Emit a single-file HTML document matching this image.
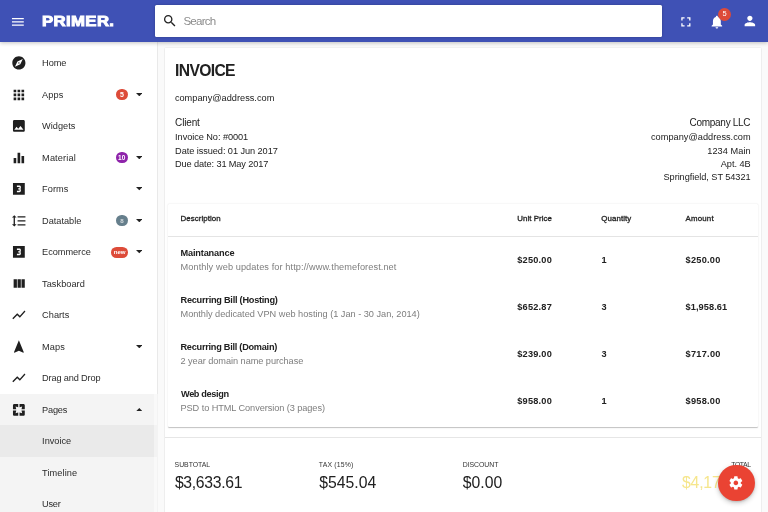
<!DOCTYPE html>
<html><head><meta charset="utf-8"><title>Invoice</title>
<style>
*{box-sizing:border-box;margin:0;padding:0}
html,body{width:768px;height:512px;overflow:hidden}
body{font-family:"Liberation Sans",sans-serif;background:#fafafa;color:#212121;position:relative}
.x{position:absolute;white-space:nowrap;z-index:3}
.bg{position:absolute;z-index:1}
.top{position:absolute;left:0;top:0;width:768px;height:41.700px;background:#3f51b5;box-shadow:0 1px 4px rgba(0,0,0,.24);z-index:2}
.top svg{position:absolute;width:15.75px;height:15.75px}
.logo{position:absolute;left:41.900px;top:9.800px;font-weight:bold;font-size:14.600px;color:#fff;letter-spacing:.3px;line-height:22px;-webkit-text-stroke:.9px #fff;z-index:3;transform-origin:0 50%;transform:scaleX(1.150)}
.search{position:absolute;left:155px;top:5px;width:506.800px;height:31.600px;background:#fff;border-radius:1.500px;box-shadow:0 0 2.500px rgba(0,0,0,.28);z-index:2}
.side{position:absolute;left:0;top:0;width:158px;height:512px;background:#fff;border-right:1px solid #e9e9e9;z-index:1}
svg.ic{position:absolute;width:15.75px;height:15.75px;z-index:3}
svg.ar{position:absolute;z-index:3}
.bd{position:absolute;border-radius:6px;color:#fff;text-align:center;font-weight:bold;z-index:3}
.card{position:absolute;left:165.100px;top:48.300px;width:596.400px;height:480px;background:#fff;box-shadow:0 0 1.500px rgba(0,0,0,.14),0 .5px 1.500px rgba(0,0,0,.08);z-index:1}
.tbl{position:absolute;left:167.700px;top:203.700px;width:590px;height:223.300px;background:#fff;border-radius:1px;box-shadow:0 1.200px .6px -.6px rgba(0,0,0,.13),0 .7px .7px rgba(0,0,0,.1),0 .7px 2px rgba(0,0,0,.1);z-index:1}
.hl{position:absolute;left:167.700px;top:235.700px;width:590px;height:1px;background:#e4e4e4;z-index:2}
.sep{position:absolute;left:165px;top:437px;width:596.400px;height:1px;background:#e6e6e6;z-index:2}
.fab{position:absolute;left:718.200px;top:464.700px;width:36.600px;height:36.600px;border-radius:50%;background:#ea4333;box-shadow:0 2px 5px rgba(0,0,0,.22),0 1px 2px rgba(0,0,0,.12);z-index:9}
.fab svg{position:absolute;left:9.900px;top:10.500px;width:15.75px;height:15.75px}
.nb{position:absolute;left:718.100px;top:8.200px;width:13.200px;height:12.800px;border-radius:6.600px;background:#dd4b39;color:#fff;font-size:7.500px;line-height:12.800px;text-align:center;z-index:4}
#w{position:absolute;left:0;top:0;width:768px;height:512px;will-change:transform;transform:translateZ(0)}
</style></head><body><div id="w">
<div class="side"></div>
<div class="bg" style="left:0;top:393.750px;width:157px;height:119px;background:#f4f4f4"></div>
<div class="bg" style="left:0;top:425.300px;width:157px;height:31.500px;background:#eaeaea"></div>
<div class="bg" style="left:153.700px;top:393.750px;width:3.900px;height:119px;background:rgba(255,255,255,.45)"></div>
<svg class="ic" style="left:10.500px;top:55.02px" viewBox="0 0 24 24" fill="#1f1f1f"><path d="M12 10.900c-.61 0-1.100.49-1.100 1.100s.49 1.100 1.100 1.100c.61 0 1.100-.49 1.100-1.100s-.49-1.100-1.100-1.100zM12 2C6.480 2 2 6.480 2 12s4.480 10 10 10 10-4.480 10-10S17.520 2 12 2zm2.190 12.190L6 18l3.810-8.190L18 6l-3.810 8.190z"/></svg>
<svg class="ic" style="left:10.500px;top:86.53px" viewBox="0 0 24 24" fill="#1f1f1f"><path d="M4 8h4V4H4v4zm6 12h4v-4h-4v4zm-6 0h4v-4H4v4zm0-6h4v-4H4v4zm6 0h4v-4h-4v4zm6-10v4h4V4h-4zm-6 4h4V4h-4v4zm6 6h4v-4h-4v4zm0 6h4v-4h-4v4z"/></svg>
<div class="bd" style="left:115.9px;top:88.80px;width:12.2px;height:11.4px;line-height:11.4px;font-size:7px;background:#dd4b39">5</div>
<svg class="ar" style="left:135.800px;top:92.90px" width="6.600" height="3.300" viewBox="0 0 6.600 3.300"><path fill="#222" d="M0 0h6.600L3.300 3.300z"/></svg>
<svg class="ic" style="left:10.500px;top:118.03px" viewBox="0 0 24 24" fill="#1f1f1f"><path d="M21 19V5c0-1.100-.9-2-2-2H5c-1.100 0-2 .9-2 2v14c0 1.100.9 2 2 2h14c1.100 0 2-.9 2-2zM8.500 13.500l2.500 3.010L14.500 12l4.500 6H5l3.500-4.500z"/></svg>
<svg class="ic" style="left:10.500px;top:149.53px" viewBox="0 0 24 24" fill="#1f1f1f"><path d="M10 20h4V4h-4v16zm-6 0h4v-8H4v8zM16 9v11h4V9h-4z"/></svg>
<div class="bd" style="left:115.5px;top:151.80px;width:12.3px;height:11.4px;line-height:11.4px;font-size:6.5px;background:#8e24aa">10</div>
<svg class="ar" style="left:135.800px;top:155.90px" width="6.600" height="3.300" viewBox="0 0 6.600 3.300"><path fill="#222" d="M0 0h6.600L3.300 3.300z"/></svg>
<svg class="ic" style="left:10.500px;top:181.03px" viewBox="0 0 24 24" fill="#1f1f1f"><path d="M21 3H3v18h18V3zm-6 7.500c0 .83-.67 1.500-1.500 1.500.83 0 1.500.67 1.500 1.500V15c0 1.110-.9 2-2 2H9v-2h4v-2h-2v-2h2V9H9V7h4c1.100 0 2 .89 2 2v1.500z"/></svg>
<svg class="ar" style="left:135.800px;top:187.40px" width="6.600" height="3.300" viewBox="0 0 6.600 3.300"><path fill="#222" d="M0 0h6.600L3.300 3.300z"/></svg>
<svg class="ic" style="left:10.500px;top:212.53px" viewBox="0 0 24 24" fill="#1f1f1f"><path d="M6 7h2.500L5 3.500 1.500 7H4v10H1.500L5 20.500 8.500 17H6V7zm4-2v2h12V5H10zm0 14h12v-2H10v2zm0-6h12v-2H10v2z"/></svg>
<div class="bd" style="left:116.1px;top:214.80px;width:11.9px;height:11.4px;line-height:11.4px;font-size:6.2px;background:#667f8c;color:rgba(255,255,255,.72)">8</div>
<svg class="ar" style="left:135.800px;top:218.90px" width="6.600" height="3.300" viewBox="0 0 6.600 3.300"><path fill="#222" d="M0 0h6.600L3.300 3.300z"/></svg>
<svg class="ic" style="left:10.500px;top:244.03px" viewBox="0 0 24 24" fill="#1f1f1f"><path d="M21 3H3v18h18V3zm-6 7.500c0 .83-.67 1.500-1.500 1.500.83 0 1.500.67 1.500 1.500V15c0 1.110-.9 2-2 2H9v-2h4v-2h-2v-2h2V9H9V7h4c1.100 0 2 .89 2 2v1.500z"/></svg>
<div class="bd" style="left:111px;top:247.30px;width:17.3px;height:10.4px;line-height:10.4px;font-size:6.1px;background:#dd4b39">new</div>
<svg class="ar" style="left:135.800px;top:250.40px" width="6.600" height="3.300" viewBox="0 0 6.600 3.300"><path fill="#222" d="M0 0h6.600L3.300 3.300z"/></svg>
<svg class="ic" style="left:10.500px;top:275.52px" viewBox="0 0 24 24" fill="#1f1f1f"><path d="M10 18h5V5h-5v13zm-6 0h5V5H4v13zM16 5v13h5V5h-5z"/></svg>
<svg class="ic" style="left:10.500px;top:307.02px" viewBox="0 0 24 24" fill="#1f1f1f"><path d="M3.500 18.490l6-6.010 4 4L22 6.920l-1.410-1.410-7.090 7.970-4-4L2 16.990z"/></svg>
<svg class="ic" style="left:10.500px;top:338.52px" viewBox="0 0 24 24" fill="#1f1f1f"><path d="M12 2L4.500 20.290l.71.710L12 18l6.790 3 .71-.71z"/></svg>
<svg class="ar" style="left:135.800px;top:344.90px" width="6.600" height="3.300" viewBox="0 0 6.600 3.300"><path fill="#222" d="M0 0h6.600L3.300 3.300z"/></svg>
<svg class="ic" style="left:10.500px;top:370.02px" viewBox="0 0 24 24" fill="#1f1f1f"><path d="M3.500 18.490l6-6.010 4 4L22 6.920l-1.410-1.410-7.090 7.970-4-4L2 16.990z"/></svg>
<svg class="ic" style="left:10.500px;top:401.52px" viewBox="0 0 24 24" fill="#1f1f1f"><path d="M3 5v6h5L7 7l4 1V3H5c-1.100 0-2 .9-2 2zm5 8H3v6c0 1.100.9 2 2 2h6v-5l-4 1 1-4zm9 4l-4-1v5h6c1.100 0 2-.9 2-2v-6h-5l1 4zm2-14h-6v5l4-1-1 4h5V5c0-1.100-.9-2-2-2z"/></svg>
<svg class="ar" style="left:135.800px;top:407.90px" width="6.600" height="3.300" viewBox="0 0 6.600 3.300"><path fill="#222" d="M0 3.300h6.600L3.300 0z"/></svg>
<div class="top">
<svg style="left:10.400px;top:13.800px" viewBox="0 0 24 24"><path fill="#fff" d="M3 18h18v-2H3v2zm0-5h18v-2H3v2zm0-7v2h18V6H3z"/></svg>
<svg style="left:677.600px;top:13.600px" viewBox="0 0 24 24"><path fill="#fff" d="M7 14H5v5h5v-2H7v-3zm-2-4h2V7h3V5H5v5zm12 7h-3v2h5v-5h-2v3zM14 5v2h3v3h2V5h-5z"/></svg>
<svg style="left:709.300px;top:13.500px" viewBox="0 0 24 24"><path fill="#fff" d="M12 22c1.100 0 2-.9 2-2h-4c0 1.100.89 2 2 2zm6-6v-5c0-3.070-1.640-5.640-4.500-6.320V4c0-.83-.67-1.500-1.500-1.500s-1.500.67-1.500 1.500v.68C7.630 5.360 6 7.920 6 11v5l-2 2v1h16v-1l-2-2z"/></svg>
<svg style="left:741.700px;top:13.200px" viewBox="0 0 24 24"><path fill="#fff" d="M12 12c2.210 0 4-1.790 4-4s-1.790-4-4-4-4 1.790-4 4 1.790 4 4 4zm0 2c-2.670 0-8 1.340-8 4v2h16v-2c0-2.660-5.330-4-8-4z"/></svg>
</div>
<div class="logo">PRIMER.</div>
<div class="search"><svg style="position:absolute;left:7.200px;top:8.400px;width:15.75px;height:15.75px" viewBox="0 0 24 24"><path fill="#222" d="M15.500 14h-.79l-.28-.27A6.470 6.470 0 0 0 16 9.500 6.500 6.500 0 1 0 9.500 16c1.610 0 3.090-.59 4.230-1.570l.27.28v.79l5 4.990L20.490 19l-4.990-5zm-6 0C7.010 14 5 11.990 5 9.500S7.010 5 9.500 5 14 7.010 14 9.500 11.990 14 9.500 14z"/></svg></div>
<div class="nb">5</div>
<div class="card"></div>
<div class="tbl"></div>
<div class="hl"></div>
<div class="sep"></div>
<div class="x" style="left:42.10px;top:57.17px;font-size:9.2px;line-height:12.88px;letter-spacing:-0.039px;color:#2b2b2b">Home</div>
<div class="x" style="left:42.10px;top:88.67px;font-size:9.2px;line-height:12.88px;letter-spacing:0.082px;color:#2b2b2b">Apps</div>
<div class="x" style="left:42.10px;top:120.17px;font-size:9.2px;line-height:12.88px;letter-spacing:-0.001px;color:#2b2b2b">Widgets</div>
<div class="x" style="left:42.10px;top:151.67px;font-size:9.2px;line-height:12.88px;letter-spacing:0.130px;color:#2b2b2b">Material</div>
<div class="x" style="left:42.10px;top:183.17px;font-size:9.2px;line-height:12.88px;letter-spacing:0.042px;color:#2b2b2b">Forms</div>
<div class="x" style="left:42.10px;top:214.67px;font-size:9.2px;line-height:12.88px;letter-spacing:-0.018px;color:#2b2b2b">Datatable</div>
<div class="x" style="left:42.10px;top:246.17px;font-size:9.2px;line-height:12.88px;letter-spacing:-0.039px;color:#2b2b2b">Ecommerce</div>
<div class="x" style="left:42.10px;top:277.67px;font-size:9.2px;line-height:12.88px;letter-spacing:0.039px;color:#2b2b2b">Taskboard</div>
<div class="x" style="left:42.10px;top:309.17px;font-size:9.2px;line-height:12.88px;letter-spacing:0.028px;color:#2b2b2b">Charts</div>
<div class="x" style="left:42.10px;top:340.67px;font-size:9.2px;line-height:12.88px;letter-spacing:0.077px;color:#2b2b2b">Maps</div>
<div class="x" style="left:42.10px;top:372.17px;font-size:9.2px;line-height:12.88px;letter-spacing:-0.147px;color:#2b2b2b">Drag and Drop</div>
<div class="x" style="left:42.10px;top:403.67px;font-size:9.2px;line-height:12.88px;letter-spacing:-0.191px;color:#2b2b2b">Pages</div>
<div class="x" style="left:42.10px;top:435.17px;font-size:9.2px;line-height:12.88px;letter-spacing:-0.004px;color:#2b2b2b">Invoice</div>
<div class="x" style="left:42.10px;top:466.67px;font-size:9.2px;line-height:12.88px;letter-spacing:0.101px;color:#2b2b2b">Timeline</div>
<div class="x" style="left:42.10px;top:498.17px;font-size:9.2px;line-height:12.88px;letter-spacing:-0.269px;color:#2b2b2b">User</div>
<div class="x" style="left:183.40px;top:13.01px;font-size:11.6px;line-height:16.24px;letter-spacing:-0.767px;color:#8c8c8c">Search</div>
<div class="x" style="left:175.10px;top:59.79px;font-size:15.7px;line-height:21.98px;letter-spacing:-0.686px;color:#212121;font-weight:bold">INVOICE</div>
<div class="x" style="left:174.90px;top:91.57px;font-size:9.2px;line-height:12.88px;letter-spacing:0.011px;color:#212121">company@address.com</div>
<div class="x" style="left:175.10px;top:115.86px;font-size:10px;line-height:14.0px;letter-spacing:-0.156px;color:#212121">Client</div>
<div class="x" style="left:175.10px;top:131.42px;font-size:9.2px;line-height:12.88px;letter-spacing:-0.060px;color:#212121">Invoice No: #0001</div>
<div class="x" style="left:175.10px;top:144.57px;font-size:9.2px;line-height:12.88px;letter-spacing:-0.065px;color:#212121">Date issued: 01 Jun 2017</div>
<div class="x" style="left:175.10px;top:157.82px;font-size:9.2px;line-height:12.88px;letter-spacing:-0.111px;color:#212121">Due date: 31 May 2017</div>
<div class="x" style="left:689.60px;top:115.86px;font-size:10px;line-height:14.0px;letter-spacing:-0.292px;color:#212121">Company LLC</div>
<div class="x" style="left:651.00px;top:131.42px;font-size:9.2px;line-height:12.88px;letter-spacing:0.022px;color:#212121">company@address.com</div>
<div class="x" style="left:707.30px;top:144.57px;font-size:9.2px;line-height:12.88px;letter-spacing:0.049px;color:#212121">1234 Main</div>
<div class="x" style="left:720.80px;top:157.82px;font-size:9.2px;line-height:12.88px;letter-spacing:-0.057px;color:#212121">Apt. 4B</div>
<div class="x" style="left:663.50px;top:171.02px;font-size:9.2px;line-height:12.88px;letter-spacing:-0.055px;color:#212121">Springfield, ST 54321</div>
<div class="x" style="left:180.50px;top:212.96px;font-size:7.9px;line-height:11.06px;letter-spacing:0.073px;color:#222;-webkit-text-stroke:0.3px #222">Description</div>
<div class="x" style="left:517.30px;top:212.96px;font-size:7.9px;line-height:11.06px;letter-spacing:0.033px;color:#222;-webkit-text-stroke:0.3px #222">Unit Price</div>
<div class="x" style="left:601.30px;top:212.96px;font-size:7.9px;line-height:11.06px;letter-spacing:0.087px;color:#222;-webkit-text-stroke:0.3px #222">Quantity</div>
<div class="x" style="left:685.60px;top:212.96px;font-size:7.9px;line-height:11.06px;letter-spacing:0.159px;color:#222;-webkit-text-stroke:0.3px #222">Amount</div>
<div class="x" style="left:180.50px;top:246.57px;font-size:9.2px;line-height:12.88px;letter-spacing:-0.166px;color:#212121;font-weight:bold">Maintanance</div>
<div class="x" style="left:180.50px;top:260.87px;font-size:9.2px;line-height:12.88px;letter-spacing:0.091px;color:#7d7d7d">Monthly web updates for http://www.themeforest.net</div>
<div class="x" style="left:517.30px;top:253.87px;font-size:9.2px;line-height:12.88px;letter-spacing:0.214px;color:#212121;font-weight:bold">$250.00</div>
<div class="x" style="left:601.60px;top:253.87px;font-size:9.2px;line-height:12.88px;letter-spacing:-0.200px;color:#212121;font-weight:bold">1</div>
<div class="x" style="left:685.60px;top:253.87px;font-size:9.2px;line-height:12.88px;letter-spacing:0.247px;color:#212121;font-weight:bold">$250.00</div>
<div class="x" style="left:180.50px;top:293.67px;font-size:9.2px;line-height:12.88px;letter-spacing:-0.248px;color:#212121;font-weight:bold">Recurring Bill (Hosting)</div>
<div class="x" style="left:180.50px;top:307.97px;font-size:9.2px;line-height:12.88px;letter-spacing:-0.014px;color:#7d7d7d">Monthly dedicated VPN web hosting (1 Jan - 30 Jan, 2014)</div>
<div class="x" style="left:517.30px;top:300.97px;font-size:9.2px;line-height:12.88px;letter-spacing:0.214px;color:#212121;font-weight:bold">$652.87</div>
<div class="x" style="left:601.60px;top:300.97px;font-size:9.2px;line-height:12.88px;letter-spacing:-0.200px;color:#212121;font-weight:bold">3</div>
<div class="x" style="left:685.60px;top:300.97px;font-size:9.2px;line-height:12.88px;letter-spacing:0.078px;color:#212121;font-weight:bold">$1,958.61</div>
<div class="x" style="left:180.50px;top:340.77px;font-size:9.2px;line-height:12.88px;letter-spacing:-0.264px;color:#212121;font-weight:bold">Recurring Bill (Domain)</div>
<div class="x" style="left:180.50px;top:355.07px;font-size:9.2px;line-height:12.88px;letter-spacing:-0.050px;color:#7d7d7d">2 year domain name purchase</div>
<div class="x" style="left:517.30px;top:348.07px;font-size:9.2px;line-height:12.88px;letter-spacing:0.214px;color:#212121;font-weight:bold">$239.00</div>
<div class="x" style="left:601.60px;top:348.07px;font-size:9.2px;line-height:12.88px;letter-spacing:-0.200px;color:#212121;font-weight:bold">3</div>
<div class="x" style="left:685.60px;top:348.07px;font-size:9.2px;line-height:12.88px;letter-spacing:0.264px;color:#212121;font-weight:bold">$717.00</div>
<div class="x" style="left:181.00px;top:387.87px;font-size:9.2px;line-height:12.88px;letter-spacing:-0.377px;color:#212121;font-weight:bold">Web design</div>
<div class="x" style="left:180.50px;top:402.17px;font-size:9.2px;line-height:12.88px;letter-spacing:-0.072px;color:#7d7d7d">PSD to HTML Conversion (3 pages)</div>
<div class="x" style="left:517.30px;top:395.17px;font-size:9.2px;line-height:12.88px;letter-spacing:0.214px;color:#212121;font-weight:bold">$958.00</div>
<div class="x" style="left:601.60px;top:395.17px;font-size:9.2px;line-height:12.88px;letter-spacing:-0.200px;color:#212121;font-weight:bold">1</div>
<div class="x" style="left:685.60px;top:395.17px;font-size:9.2px;line-height:12.88px;letter-spacing:0.247px;color:#212121;font-weight:bold">$958.00</div>
<div class="x" style="left:174.60px;top:459.85px;font-size:6.9px;line-height:9.66px;letter-spacing:-0.036px;color:#333">SUBTOTAL</div>
<div class="x" style="left:318.80px;top:459.85px;font-size:6.9px;line-height:9.66px;letter-spacing:0.164px;color:#333">TAX (15%)</div>
<div class="x" style="left:462.80px;top:459.85px;font-size:6.9px;line-height:9.66px;letter-spacing:-0.055px;color:#333">DISCOUNT</div>
<div class="x" style="right:17.35px;top:459.85px;font-size:6.9px;line-height:9.66px;letter-spacing:-0.450px;color:#333">TOTAL</div>
<div class="x" style="left:174.90px;top:471.56px;font-size:15.75px;line-height:22.05px;letter-spacing:-0.310px;color:#212121">$3,633.61</div>
<div class="x" style="left:319.30px;top:471.56px;font-size:15.75px;line-height:22.05px;letter-spacing:0.010px;color:#212121">$545.04</div>
<div class="x" style="left:462.80px;top:471.56px;font-size:15.75px;line-height:22.05px;letter-spacing:0.020px;color:#212121">$0.00</div>
<div class="x" style="left:682.00px;top:471.56px;font-size:15.75px;line-height:22.05px;letter-spacing:-0.185px;color:#f6e68c">$4,178.65</div>
<div class="fab"><svg viewBox="0 0 24 24"><path fill="#fff" d="M19.430 12.980c.04-.32.07-.64.07-.98s-.03-.66-.07-.98l2.110-1.650c.19-.15.240-.42.120-.64l-2-3.460c-.12-.22-.39-.3-.61-.22l-2.490 1c-.52-.4-1.080-.73-1.690-.98l-.38-2.650C14.460 2.180 14.250 2 14 2h-4c-.25 0-.46.180-.49.420l-.38 2.650c-.61.250-1.170.59-1.690.98l-2.490-1c-.23-.09-.49 0-.61.220l-2 3.460c-.13.220-.07.490.12.640l2.110 1.650c-.4.320-.7.650-.7.980s.3.660.7.980l-2.110 1.650c-.19.150-.24.420-.12.640l2 3.460c.12.220.39.300.61.220l2.490-1c.52.400 1.080.73 1.690.98l.38 2.650c.3.240.24.420.49.420h4c.25 0 .46-.18.490-.42l.38-2.650c.61-.25 1.170-.59 1.690-.98l2.490 1c.23.090.49 0 .61-.22l2-3.460c.12-.22.070-.49-.12-.64l-2.110-1.650zM12 15.500c-1.930 0-3.500-1.570-3.500-3.500s1.570-3.500 3.500-3.500 3.500 1.570 3.500 3.500-1.570 3.500-3.500 3.500z"/></svg></div>
</div></body></html>
